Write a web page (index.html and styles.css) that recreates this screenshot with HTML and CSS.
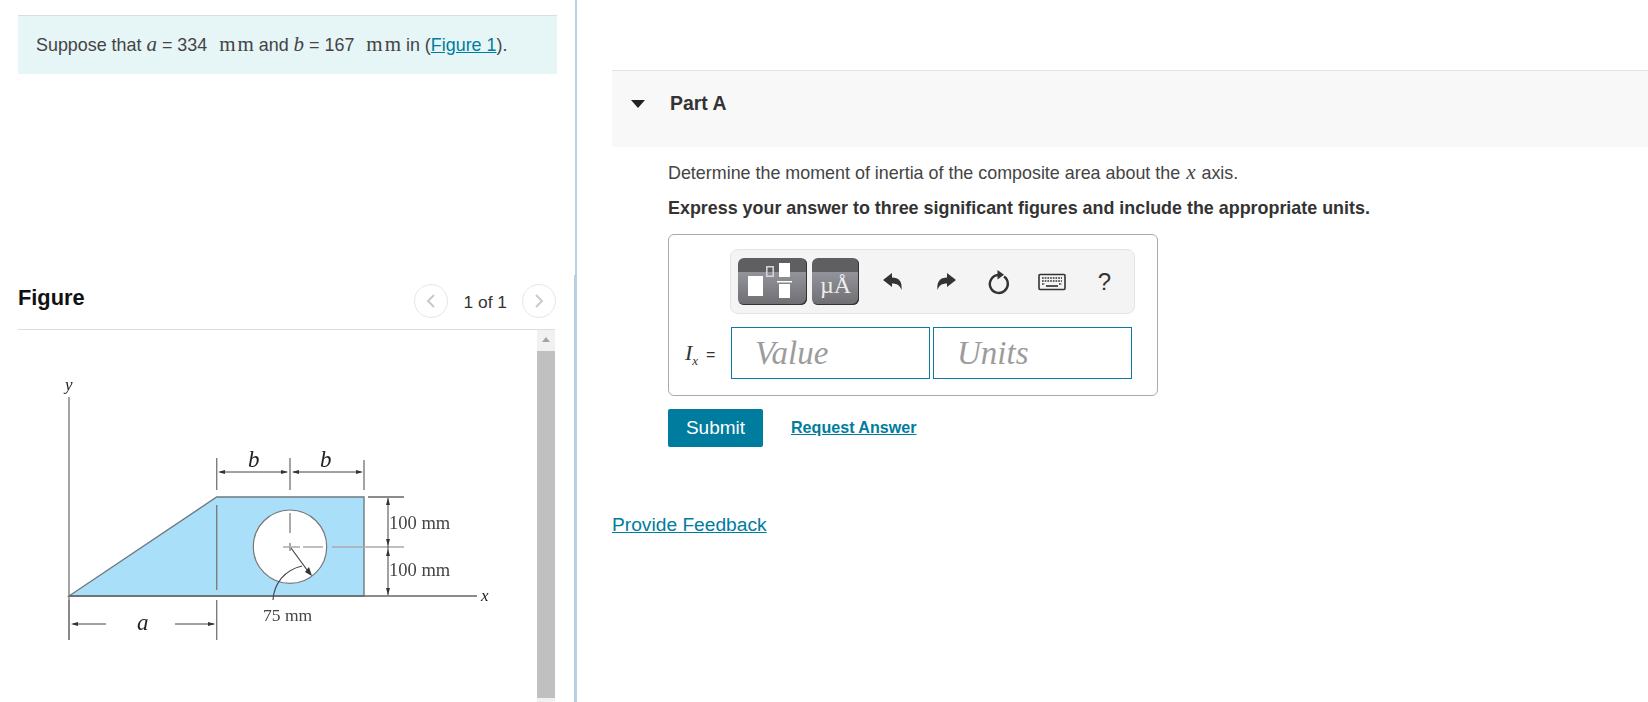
FILE: index.html
```html
<!DOCTYPE html>
<html lang="en">
<head>
<meta charset="utf-8">
<title>Part A</title>
<link rel="stylesheet" href="styles.css">
</head>
<body>
<div class="page">
  <section class="left">
    <div class="callout">Suppose that <span class="mi">a</span> = 334 <span class="unit">mm</span> and <span class="mi">b</span> = 167 <span class="unit">mm</span> in (<a href="#" class="link">Figure 1</a>).</div>
    <div class="fig-head">
      <h2 class="fig-title">Figure</h2>
      <div class="pager">
        <span class="circle"><svg width="12" height="16" viewBox="0 0 12 16"><path d="M9 2 L3 8 L9 14" fill="none" stroke="#c9c9c9" stroke-width="2"/></svg></span>
        <span class="pager-text">1 of 1</span>
        <span class="circle"><svg width="12" height="16" viewBox="0 0 12 16"><path d="M3 2 L9 8 L3 14" fill="none" stroke="#c9c9c9" stroke-width="2"/></svg></span>
      </div>
    </div>
    <div class="fig-body">
      <div class="diagram">
        <svg class="fig-svg" width="519" height="372" viewBox="18 330 519 372">
          <g stroke="#7d7d7d" fill="none" stroke-width="1.4">
            <path d="M69 397V640"/>
            <path d="M69 596L216.700 497H364V596Z" fill="#aadffa" stroke="#6f7a80"/>
            <path d="M69 596H477" stroke="#666"/>
            <path d="M216.700 505V590M216.700 458V490M216.700 600V640"/>
            <path d="M290 458V490M364 460V490"/>
            <path d="M69 600V640"/>
            <circle cx="290" cy="546.700" r="36.700" fill="#fff" stroke="#777" stroke-width="1.200"/>
            <path d="M290 513V533M290 543V551" stroke="#666" stroke-width="1.100"/>
            <path d="M283 547H300M303 547H323M332 547H404" stroke="#aaa"/>
            <path d="M368 497H404" stroke="#666"/>
            <path d="M388 498V595" stroke="#444" stroke-width="1"/>
            <path d="M220 472H287M293 472H361M73 624H106M175 624H214" stroke="#444" stroke-width="1"/>
            <path d="M291 548L310 574" stroke="#444" stroke-width="1.200"/>
            <path d="M302 566C285 570 274 583 273 600" stroke="#444" stroke-width="1.100"/>
          </g>
          <g fill="#333">
            <path d="M218 472L225 470V474ZM288 472L281 470V474ZM292 472L299 470V474ZM363 472L356 470V474ZM71 624L78 622V626ZM215 624L208 622V626Z"/>
            <path d="M388 498L386 505H390ZM388 546L386 539H390ZM388 549L386 556H390ZM388 595L386 588H390ZM312 576L305 572L309 567Z"/>
          </g>
          <g class="fig-text">
            <text x="65" y="390" class="fig-var fig-y">y</text>
            <text x="248" y="467" class="fig-var fig-b">b</text>
            <text x="320" y="467" class="fig-var fig-b">b</text>
            <text x="137" y="630" class="fig-var fig-b">a</text>
            <text x="481" y="601" class="fig-var fig-x">x</text>
            <text x="389" y="529">100 mm</text>
            <text x="389" y="576">100 mm</text>
            <text x="263" y="621" class="fig-r">75 mm</text>
          </g>
        </svg>
      </div>
      <div class="scrollbar">
        <div class="scroll-btn"><span class="scroll-up"></span></div>
        <div class="scroll-thumb"></div>
      </div>
    </div>
  </section>
  <div class="divider">
    <div class="divider-top"></div>
    <div class="divider-bottom"></div>
  </div>
  <section class="right">
    <header class="part-head">
      <span class="caret"></span>
      <h2 class="part-title">Part A</h2>
    </header>
    <div class="part-body">
      <p class="prompt">Determine the moment of inertia of the composite area about the <span class="mi mx">x</span> axis.</p>
      <p class="instr">Express your answer to three significant figures and include the appropriate units.</p>
      <div class="answer">
        <div class="toolbar">
          <div class="tool tool-tpl">
            <svg width="69" height="47" viewBox="0 0 69 47">
              <path fill="#fff" d="M10 18H25V38H10ZM41 5H52V19H41ZM39 23H54V24.500H39ZM41 26H52V40H41Z"/>
              <path fill="none" stroke="#d8d8d8" stroke-width="1.500" d="M28.800 8.800H35.200V18.200H28.800Z"/>
            </svg>
          </div>
          <div class="tool tool-unit">µÅ</div>
          <div class="icons">
            <span class="cell"><svg width="24" height="24" viewBox="0 0 24 24"><path fill="#333" d="M2 10L11 3V7.500C17.500 7.500 21.500 11 20.500 20C19 15.500 16 13.500 11 13.500V17Z"/></svg></span>
            <span class="cell"><svg width="24" height="24" viewBox="0 0 24 24"><path fill="#333" d="M22 10L13 3V7.500C6.500 7.500 2.500 11 3.500 20C5 15.500 8 13.500 13 13.500V17Z"/></svg></span>
            <span class="cell"><svg width="26" height="26" viewBox="0 0 26 26"><path fill="none" stroke="#333" stroke-width="2.400" d="M18 7.600A9 9 0 1 1 12 6"/><path fill="#333" d="M11.500 1L18 5.800L11.500 10.500Z"/></svg></span>
            <span class="cell"><svg width="28" height="18" viewBox="0 0 28 18"><rect x="1" y="1.500" width="26" height="15" rx="1" fill="none" stroke="#333" stroke-width="1.600"/><path stroke="#333" stroke-width="1.700" stroke-dasharray="1.700 1" fill="none" d="M4 5H24M4 8H24M4 11H7M21 11H24"/><path stroke="#333" stroke-width="1.700" fill="none" d="M8 13H20"/></svg></span>
            <span class="cell help">?</span>
          </div>
        </div>
        <div class="input-row">
          <span class="lhs"><i>I</i><sub><i>x</i></sub><span class="eq">=</span></span>
          <div class="field">Value</div>
          <div class="field">Units</div>
        </div>
      </div>
      <div class="actions">
        <a href="#" class="submit">Submit</a>
        <a href="#" class="request">Request Answer</a>
      </div>
    </div>
    <a href="#" class="feedback">Provide Feedback</a>
  </section>
</div>
</body>
</html>
```
FILE: styles.css
```css
* { box-sizing: border-box; }
html, body { margin: 0; height: 100%; background: #fff; overflow: hidden; }
body { font-family: "Liberation Sans", Arial, sans-serif; font-size: 17.900px; color: #333; }
.page { display: flex; height: 702px; overflow: hidden; }

.left { width: 574px; flex: none; padding: 15px 18px 0; display: flex; flex-direction: column; }
.callout { height: 59px; width: 539px; background: #e6f5f6; border-top: 1px solid #ddd; padding: 18px 18px 0; line-height: 20px; white-space: nowrap; color: #444; }
.mi { font-family: "Liberation Serif", serif; font-style: italic; font-size: 21px; }
.mx { padding: 0 1px; }
.unit { font-family: "Liberation Serif", serif; font-size: 21px; margin: 0 -2px 0 7px; letter-spacing: 2px; }
.link { color: #007c9e; }

.fig-head { margin-top: 207px; width: 537px; height: 49px; display: flex; align-items: flex-start; justify-content: space-between; border-bottom: 1px solid #ddd; }
.fig-title { margin: 5px 0 0; font-size: 21.800px; line-height: 24px; color: #111; font-weight: bold; }
.pager { display: flex; align-items: center; gap: 15px; margin: 3px -1px 0 0; }
.circle { width: 34px; height: 34px; border: 1px solid #e6e6e6; border-radius: 50%; display: flex; align-items: center; justify-content: center; }
.pager-text { font-size: 17.400px; color: #333; padding-top: 3px; }

.fig-body { display: flex; width: 537px; flex: 1; min-height: 0; }
.diagram { width: 519px; flex: none; }
.fig-svg { display: block; filter: blur(.45px); }
.fig-text text { font-family: "Liberation Serif", serif; font-size: 18.500px; fill: #444; }
.fig-text .fig-r { font-size: 17.500px; }
.fig-text .fig-var { font-style: italic; fill: #222; }
.fig-text .fig-y { font-size: 17px; }
.fig-text .fig-b { font-size: 23px; }
.fig-text .fig-x { font-size: 17px; }
.scrollbar { width: 18px; flex: none; background: #f1f1f1; display: flex; flex-direction: column; }
.scroll-btn { height: 21px; display: flex; justify-content: center; padding-top: 7px; }
.scroll-up { width: 0; height: 0; border-left: 4px solid transparent; border-right: 4px solid transparent; border-bottom: 5px solid #a3a3a3; }
.scroll-thumb { height: 347px; background: #c0c0c0; }

.divider { width: 3px; flex: none; display: flex; flex-direction: column; }
.divider-top { height: 275px; margin-left: 1px; background: #b9cfe2; }
.divider-bottom { flex: 1; background: #b9cfe2; }

.right { flex: 1; min-width: 0; padding-top: 70px; padding-left: 35px; }
.part-head { height: 77px; background: #f8f8f8; border-top: 1px solid #e2e2e2; display: flex; align-items: flex-start; padding: 22px 0 0 19px; }
.caret { width: 0; height: 0; margin-top: 7px; border-left: 7px solid transparent; border-right: 7px solid transparent; border-top: 8px solid #222; }
.part-title { margin: 0 0 0 25px; font-size: 19.400px; line-height: 21px; color: #333; font-weight: bold; }
.part-body { padding-left: 56px; }
.prompt { margin: 15px 0 0; line-height: 21px; color: #444; white-space: nowrap; }
.instr { margin: 14px 0 0; line-height: 21px; font-weight: bold; white-space: nowrap; }
.answer { margin-top: 15px; width: 490px; height: 162px; border: 1px solid #aaa; border-radius: 6px; padding: 14px 23px 0 0; }
.toolbar { margin-left: 61px; height: 65px; width: 405px; background: #f4f4f4; border: 1px solid #e4e4e4; border-radius: 8px; display: flex; align-items: flex-start; padding: 8px 0 0 7px; gap: 5px; }
.tool { height: 47px; border-radius: 6px; background: linear-gradient(#5f5f62 0 14px, #93939b 14px, #6e6e72); box-shadow: inset -1px -1px 0 #333; }
.tool-tpl { width: 69px; }
.tool-tpl svg { display: block; }
.tool-unit { width: 47px; color: #eee; font-family: "Liberation Serif", serif; font-size: 24px; line-height: 54px; text-align: center; }
.icons { display: flex; align-items: center; height: 47px; margin-left: 2px; }
.cell { width: 53px; display: flex; justify-content: center; align-items: center; }
.cell svg { display: block; }
.help { font-size: 24px; color: #333; }
.input-row { display: flex; align-items: center; margin-top: 13px; gap: 3px; }
.lhs { width: 59px; padding-left: 16px; white-space: nowrap; font-family: "Liberation Serif", serif; font-size: 22px; }
.lhs sub { font-size: 13px; line-height: 0; }
.eq { font-family: "Liberation Sans", sans-serif; font-size: 16px; margin-left: 8px; }
.field { width: 199px; height: 52px; border: 1px solid #0d7ba0; padding-left: 23px; font-family: "Liberation Serif", serif; font-style: italic; font-size: 33px; line-height: 50px; color: #9c9c9c; }
.actions { display: flex; align-items: center; margin-top: 13px; gap: 28px; }
.submit { width: 95px; height: 38px; background: #007c9e; color: #fff; border-radius: 2px; text-decoration: none; text-align: center; font-size: 19px; line-height: 38px; }
.request { font-weight: bold; font-size: 16.100px; color: #007c9e; margin-bottom: 2px; }
.feedback { display: inline-block; margin-top: 67px; font-size: 19.200px; color: #007c9e; }
```
